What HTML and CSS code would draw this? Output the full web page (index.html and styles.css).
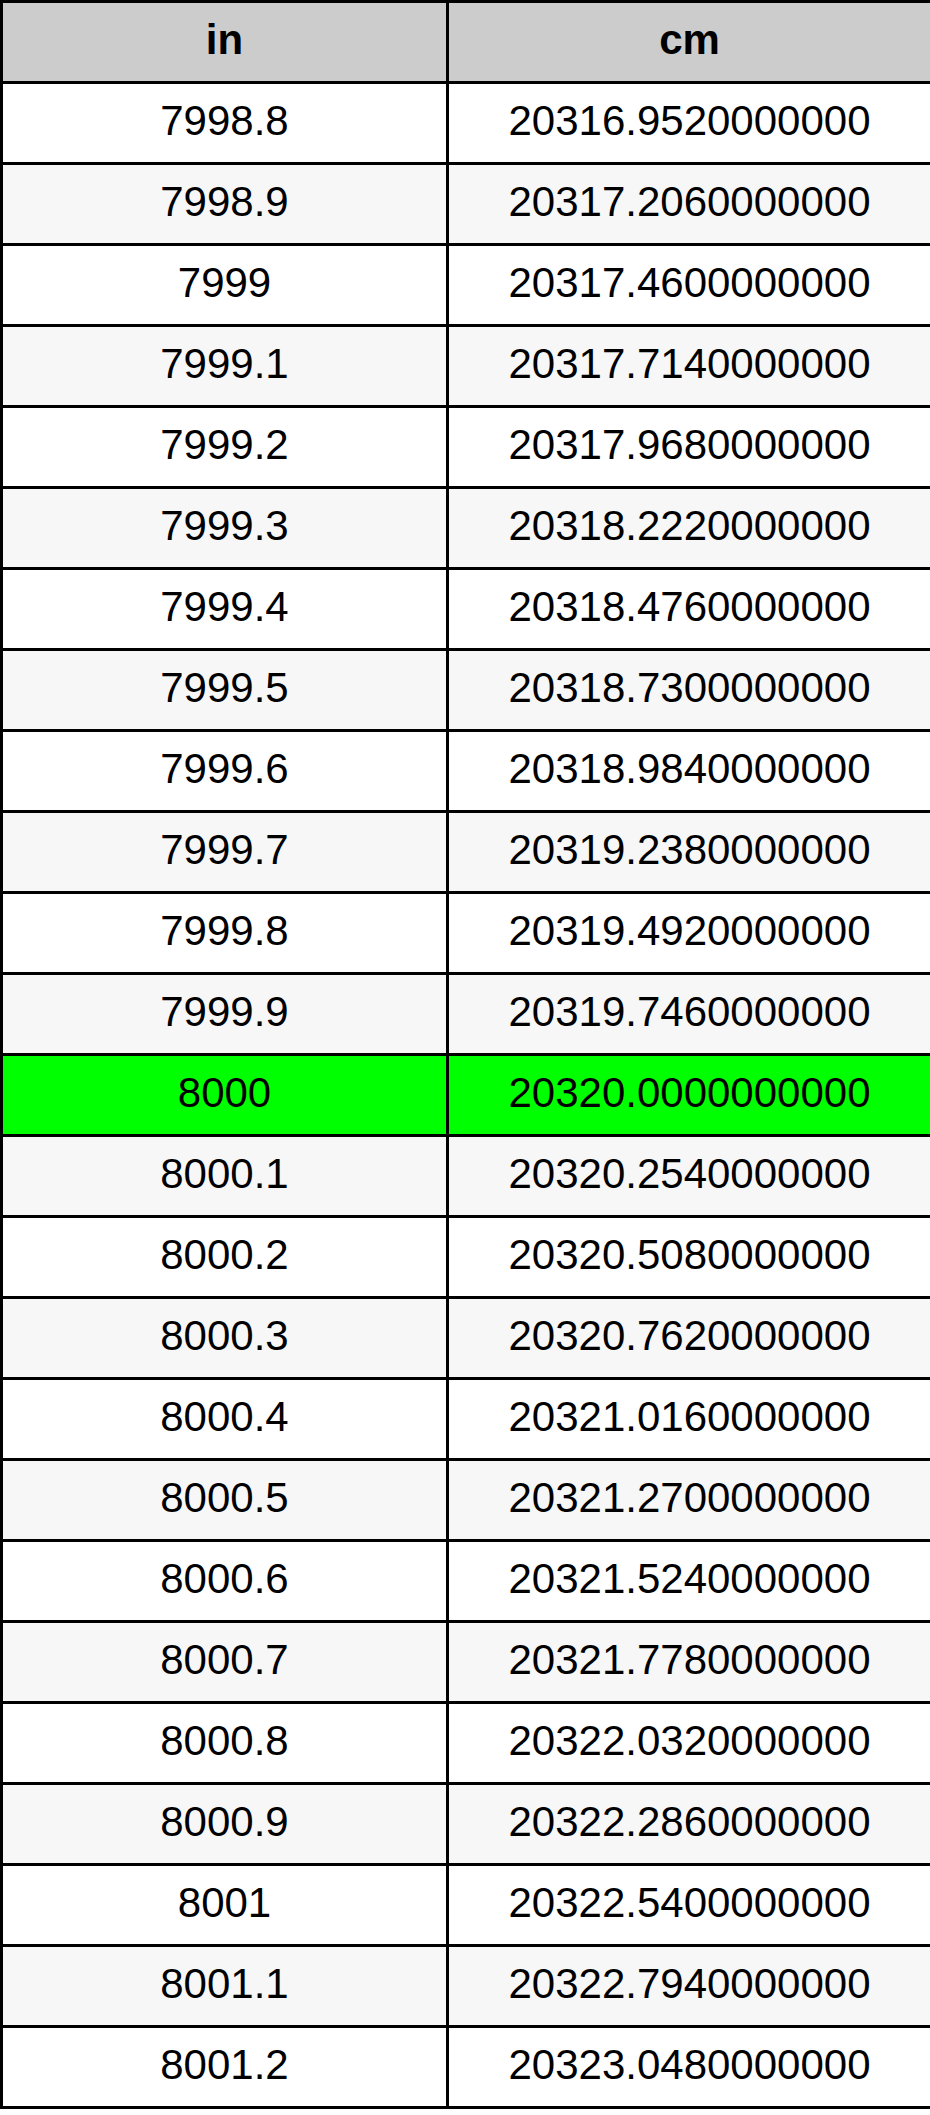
FILE: index.html
```html
<!DOCTYPE html>
<html>
<head>
<meta charset="utf-8">
<link rel="stylesheet" href="styles.css">
</head>
<body>
<table class="conv">
<colgroup><col class="c1"><col class="c2"></colgroup>
<thead>
<tr><th>in</th><th>cm</th></tr>
</thead>
<tbody>
<tr><td>7998.8</td><td>20316.9520000000</td></tr>
<tr><td>7998.9</td><td>20317.2060000000</td></tr>
<tr><td>7999</td><td>20317.4600000000</td></tr>
<tr><td>7999.1</td><td>20317.7140000000</td></tr>
<tr><td>7999.2</td><td>20317.9680000000</td></tr>
<tr><td>7999.3</td><td>20318.2220000000</td></tr>
<tr><td>7999.4</td><td>20318.4760000000</td></tr>
<tr><td>7999.5</td><td>20318.7300000000</td></tr>
<tr><td>7999.6</td><td>20318.9840000000</td></tr>
<tr><td>7999.7</td><td>20319.2380000000</td></tr>
<tr><td>7999.8</td><td>20319.4920000000</td></tr>
<tr><td>7999.9</td><td>20319.7460000000</td></tr>
<tr class="hl"><td>8000</td><td>20320.0000000000</td></tr>
<tr><td>8000.1</td><td>20320.2540000000</td></tr>
<tr><td>8000.2</td><td>20320.5080000000</td></tr>
<tr><td>8000.3</td><td>20320.7620000000</td></tr>
<tr><td>8000.4</td><td>20321.0160000000</td></tr>
<tr><td>8000.5</td><td>20321.2700000000</td></tr>
<tr><td>8000.6</td><td>20321.5240000000</td></tr>
<tr><td>8000.7</td><td>20321.7780000000</td></tr>
<tr><td>8000.8</td><td>20322.0320000000</td></tr>
<tr><td>8000.9</td><td>20322.2860000000</td></tr>
<tr><td>8001</td><td>20322.5400000000</td></tr>
<tr><td>8001.1</td><td>20322.7940000000</td></tr>
<tr><td>8001.2</td><td>20323.0480000000</td></tr>
</tbody>
</table>
</body>
</html>
```
FILE: styles.css
```css
html, body {
  margin: 0;
  padding: 0;
  background: #ffffff;
}
.conv {
  border-collapse: collapse;
  table-layout: fixed;
  width: 930px;
  font-family: "Liberation Sans", Arial, sans-serif;
  font-size: 42px;
  color: #000;
}
.conv col.c1 { width: 446px; }
.conv col.c2 { width: 484px; }
.conv th, .conv td {
  border: 3px solid #000;
  height: 81px;
  padding: 0 0 4px 0;
  text-align: center;
  vertical-align: middle;
  box-sizing: border-box;
}
.conv th {
  background: #cccccc;
  font-weight: bold;
}
.conv tbody tr:nth-child(odd) td { background: #ffffff; }
.conv tbody tr:nth-child(even) td { background: #f7f7f7; }
.conv tbody tr.hl td { background: #00ff00; }
```
